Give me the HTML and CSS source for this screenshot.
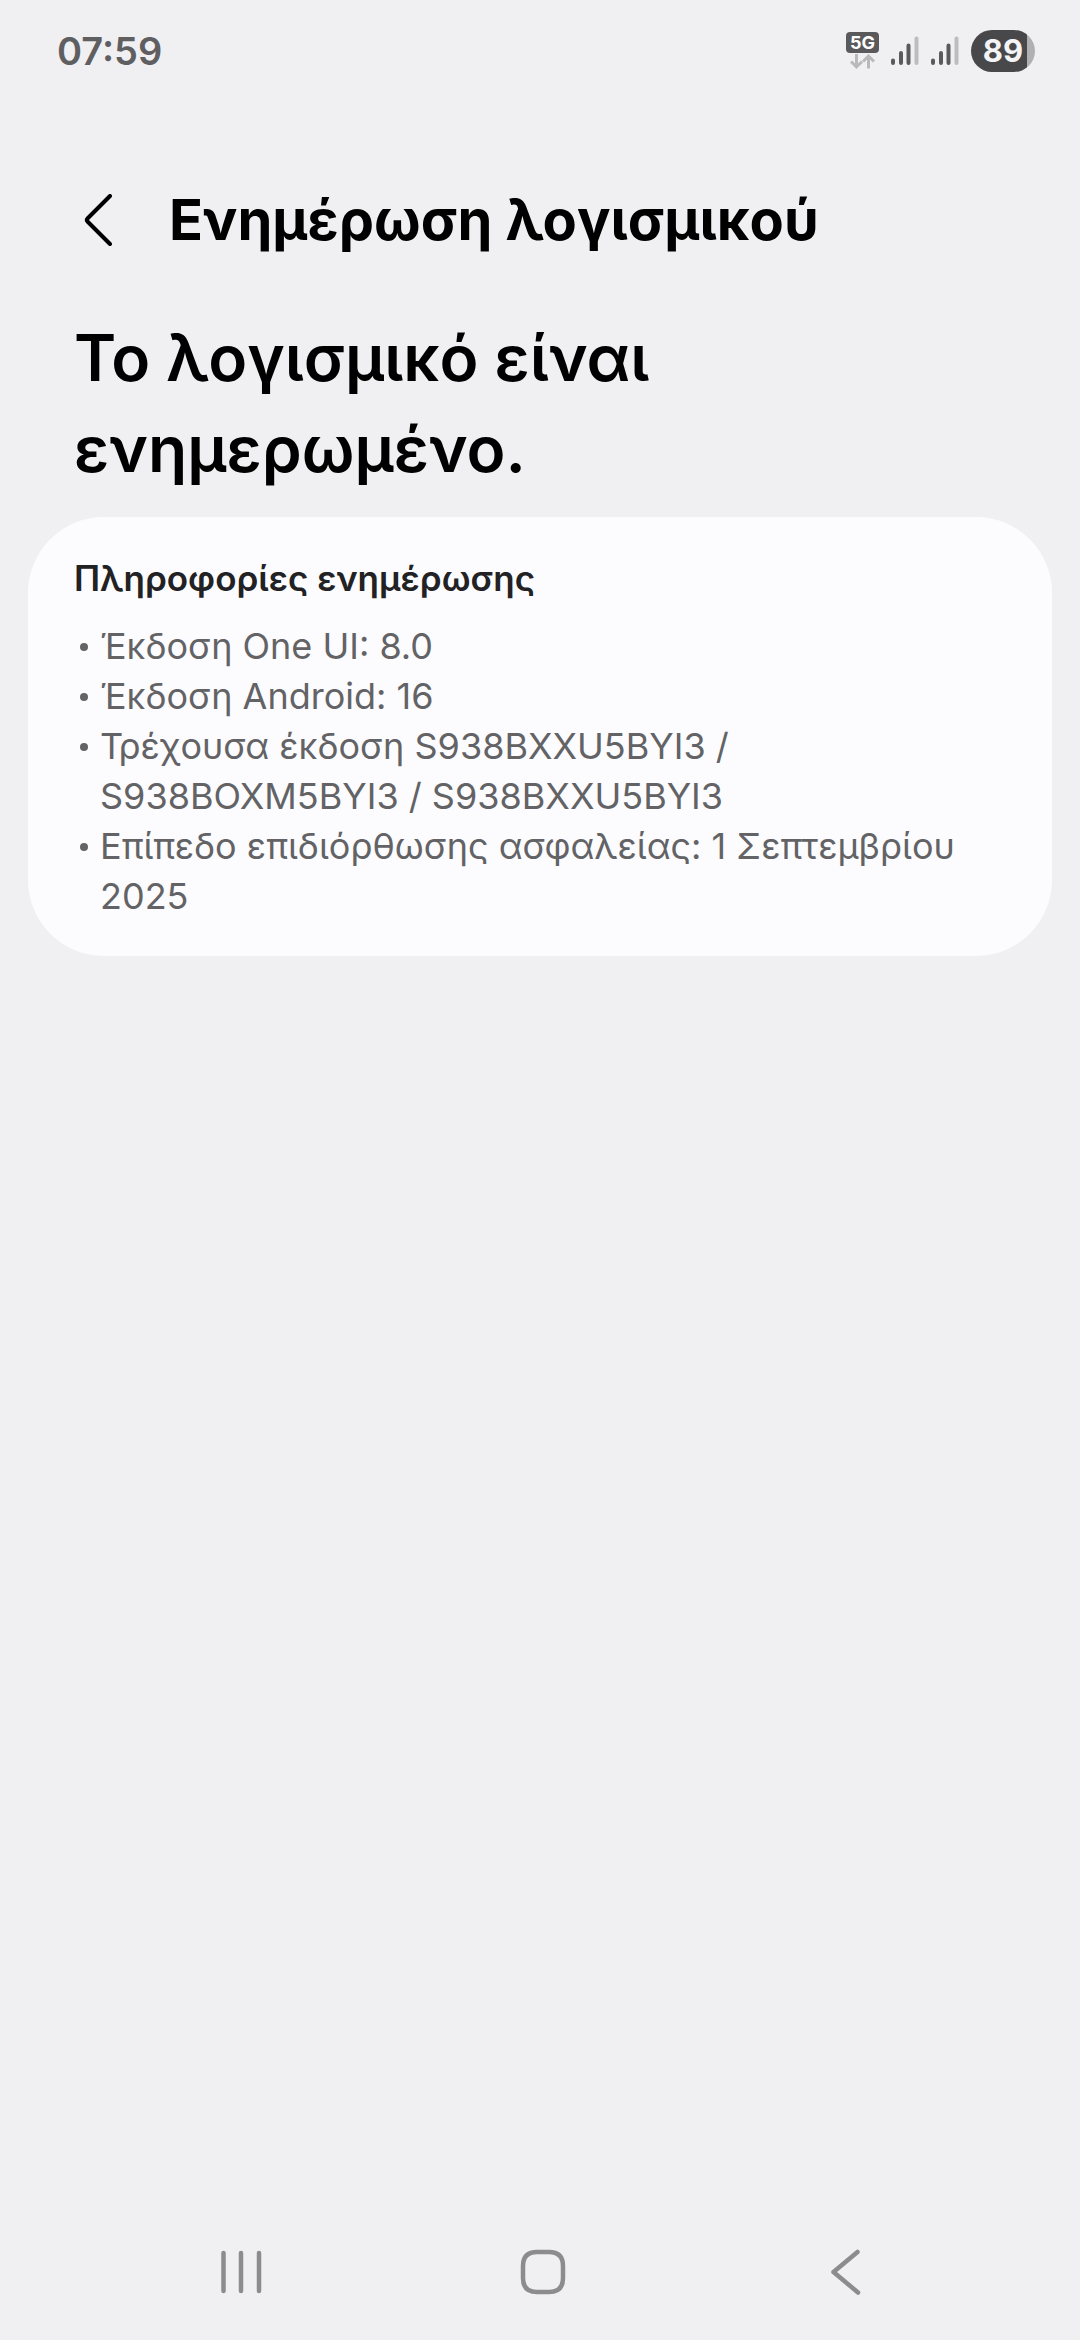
FILE: index.html
```html
<!DOCTYPE html>
<html lang="el">
<head>
  <meta charset="UTF-8">
  <meta name="viewport" content="width=device-width, initial-scale=1.0">
  <title>Ενημέρωση λογισμικού</title>
  <link rel="stylesheet" href="styles.css">
</head>
<body>
  <div class="status-bar">
    <span class="clock">07:59</span>
    <div class="status-icons">
      <div class="network">
        <span class="network-type">5G</span>
        <svg width="25" height="17" viewBox="0 0 25 17" fill="none" stroke="#b9b9bb" stroke-width="3">
          <path d="M6.5 1v13M1 8.500l5.500 5.500l5.500-5.500M18.500 15.500V3M13 8.500l5.500-5.500l5.500 5.500"/>
        </svg>
      </div>
      <svg width="28" height="30" viewBox="0 0 28 30" stroke-width="4" stroke-linecap="round">
        <path d="M2 24.500V27M10 17v10M17.500 9.500V27" stroke="#5a5a5c"/>
        <path d="M25.500 2.500V27" stroke="#bdbdbf"/>
      </svg>
      <svg width="28" height="30" viewBox="0 0 28 30" stroke-width="4" stroke-linecap="round">
        <path d="M2 24.500V27M10 17v10M17.500 9.500V27" stroke="#5a5a5c"/>
        <path d="M25.500 2.500V27" stroke="#bdbdbf"/>
      </svg>
      <span class="battery">89</span>
    </div>
  </div>

  <header class="app-bar">
    <button class="back" type="button" aria-label="Πίσω">
      <svg width="28" height="52" viewBox="0 0 28 52" fill="none" stroke="#000" stroke-width="4" stroke-linecap="round" stroke-linejoin="round">
        <path d="M26 2L3.500 24.500Q2 26 3.500 27.500L26 50"/>
      </svg>
    </button>
    <h1>Ενημέρωση λογισμικού</h1>
  </header>

  <main>
    <h2 class="update-state">Το λογισμικό είναι ενημερωμένο.</h2>

    <section class="card">
      <h3>Πληροφορίες ενημέρωσης</h3>
      <ul>
        <li>Έκδοση One UI: 8.0</li>
        <li>Έκδοση Android: 16</li>
        <li>Τρέχουσα έκδοση S938BXXU5BYI3 / S938BOXM5BYI3 / S938BXXU5BYI3</li>
        <li>Επίπεδο επιδιόρθωσης ασφαλείας: 1 Σεπτεμβρίου 2025</li>
      </ul>
    </section>
  </main>

  <nav class="nav-bar">
    <button type="button" aria-label="Πρόσφατα">
      <svg width="46" height="46" viewBox="0 0 46 46" stroke="#8c8c8e" stroke-width="4.5" stroke-linecap="round">
        <path d="M5.500 4v38M23 4v38M41 4v38"/>
      </svg>
    </button>
    <button type="button" aria-label="Αρχική">
      <svg width="46" height="46" viewBox="0 0 46 46" fill="none" stroke="#8c8c8e" stroke-width="4.5">
        <path d="M17 3H29Q43 3 43 17V29Q43 43 29 43H17Q3 43 3 29V17Q3 3 17 3Z"/>
      </svg>
    </button>
    <button type="button" aria-label="Πίσω">
      <svg width="46" height="46" viewBox="0 0 46 46" fill="none" stroke="#8c8c8e" stroke-width="4.5" stroke-linecap="round" stroke-linejoin="round">
        <path d="M35.500 3L11.500 23L36 43.500"/>
      </svg>
    </button>
  </nav>
</body>
</html>
```
FILE: styles.css
```css
:root {
  --page-bg: #f0f0f3;
  --card-bg: #fcfcff;
  --grey-text: #636366;
}

* {
  box-sizing: border-box;
}

body {
  margin: 0;
  min-height: 100vh;
  display: flex;
  flex-direction: column;
  background: var(--page-bg);
  font-family: Inter, "Noto Sans", sans-serif;
  color: #000;
}

h1, h2, h3, ul {
  margin: 0;
  padding: 0;
}

button {
  padding: 0;
  border: none;
  background: none;
  display: flex;
  align-items: center;
  justify-content: center;
}

/* status bar */
.status-bar {
  display: flex;
  align-items: center;
  justify-content: space-between;
  height: 102px;
  padding: 0 45px 0 57px;
}

.clock {
  font-size: 38px;
  font-weight: 600;
  color: #5f5f61;
}

.status-icons {
  display: flex;
  align-items: center;
  gap: 12px;
}

.network {
  display: flex;
  flex-direction: column;
  align-items: center;
}

.network-type {
  width: 33px;
  border-radius: 4px;
  background: #5a5a5c;
  color: #fff;
  font-size: 18px;
  font-weight: 700;
  line-height: 21px;
  text-align: center;
}

.battery {
  width: 64px;
  border-radius: 21px;
  background: linear-gradient(to right, #48484a 56px, #b0b0b2 56px);
  color: #f4f4f6;
  font-size: 31px;
  font-weight: 700;
  line-height: 42px;
  text-align: center;
}

/* title row */
.app-bar {
  display: flex;
  align-items: center;
  gap: 57px;
  height: 210px;
  padding: 26px 84px 0;
}

.app-bar h1 {
  font-size: 56px;
  font-weight: 700;
}

main {
  flex: 1;
  padding: 0 28px;
}

.update-state {
  max-width: 800px;
  padding: 0 46px;
  font-size: 64px;
  font-weight: 600;
  line-height: 91px;
}

.card {
  margin-top: 23px;
  padding: 36px 46px 35px;
  border-radius: 76px;
  background: var(--card-bg);
}

.card h3 {
  margin-bottom: 18px;
  font-size: 35px;
  font-weight: 600;
  line-height: 50px;
  color: #222224;
}

.card ul {
  list-style: none;
}

.card li {
  display: flex;
  font-size: 36px;
  line-height: 50px;
  color: var(--grey-text);
}

.card li::before {
  content: "";
  flex: none;
  width: 8px;
  height: 8px;
  margin: 22px 12px 0 6px;
  border-radius: 50%;
  background: var(--grey-text);
}

/* bottom navigation */
.nav-bar {
  display: flex;
  height: 136px;
  padding: 0 84px 0 90px;
}

.nav-bar button {
  flex: 1;
}
```
